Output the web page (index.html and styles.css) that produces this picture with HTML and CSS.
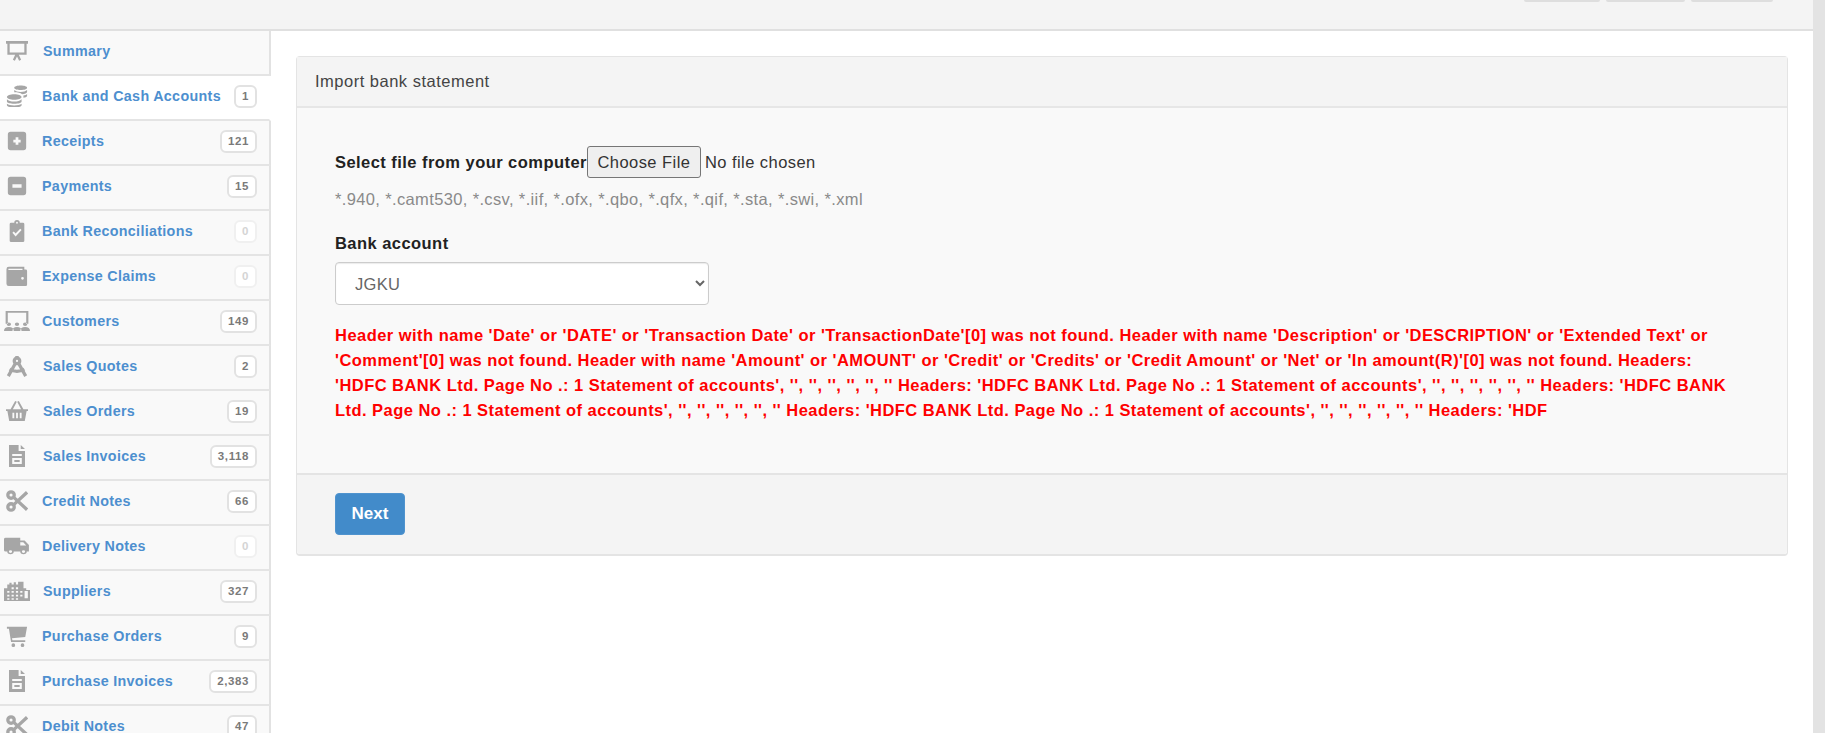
FILE: index.html
```html
<!DOCTYPE html>
<html lang="en">
<head>
<meta charset="utf-8">
<title>Import bank statement</title>
<link rel="stylesheet" href="styles.css">
</head>
<body>
<svg class="defs" width="0" height="0" aria-hidden="true">
  <symbol id="i-doc" viewBox="5 1 15 22" preserveAspectRatio="none"><path d="M5 1h9v6h6v16H5zM16 1l4 4h-4zM8 10v2h9v-2zM8 14v6h9v-6zm2 2h5v2h-5z" fill-rule="evenodd"/></symbol>
  <symbol id="i-scissors" viewBox="0 0 24 24"><g class="stroked heavy"><circle cx="5.500" cy="5.500" r="3.500"/><circle cx="5.500" cy="18.500" r="3.500"/><path d="M8.500 8 23 21.500M8.500 16 23 2.500"/></g></symbol>
</svg>
<div class="page">
  <div class="main">
    <header class="topbar">
      <span class="tab tab-a"></span><span class="tab tab-b"></span><span class="tab tab-c"></span>
    </header>
    <div class="layout">
      <nav class="sidebar">
        <a class="item shift"><svg class="icon" viewBox="0 0 24 24"><path fill-rule="evenodd" d="M0 1h24v3h-1.500v12H14l2.500 5.500-2.200 1L12 18l-2.300 4.500-2.200-1L10 16H1.500V4H0zm4 3v9.500h16V4z"/></svg><span class="label">Summary</span></a>
        <a class="item active"><svg class="icon" viewBox="0 0 24 24"><path d="M9 3c0-1.500 3-2.500 7-2.500s7 1 7 2.500-3 2.500-7 2.500-7-1-7-2.500zM9 5.500C10.500 7 13 7.500 16 7.500s5.500-.5 7-2v2c0 1.200-2.500 2.200-5.500 2.500-1.500-1.500-5-2-8.500-2zM19 11.500c2-.3 3.500-1 4-2v2.500c-.5 1-2 1.700-4 2zM1 13c0-1.500 3.500-3 8-3s8 1.500 8 3-3.500 3-8 3-8-1.500-8-3zM1 15.500c1.500 1.500 4.500 2.500 8 2.500s6.500-1 8-2.500V18c0 1.500-3.500 2.500-8 2.500S1 19.500 1 18zM1 20.500c1.500 1 4.500 1.800 8 1.800s6.500-.8 8-1.800V22c0 1.500-3.500 2.500-8 2.500S1 23.500 1 22z"/></svg><span class="label">Bank and Cash Accounts</span><span class="badge">1</span></a>
        <a class="item"><svg class="icon" viewBox="0 0 24 24"><path fill-rule="evenodd" d="M5 2h14a3 3 0 0 1 3 3v14a3 3 0 0 1-3 3H5a3 3 0 0 1-3-3V5a3 3 0 0 1 3-3zm5.500 6v2.500H8v3h2.500V16h3v-2.500H16v-3h-2.500V8z"/></svg><span class="label">Receipts</span><span class="badge">121</span></a>
        <a class="item"><svg class="icon" viewBox="0 0 24 24"><path fill-rule="evenodd" d="M5 2h14a3 3 0 0 1 3 3v14a3 3 0 0 1-3 3H5a3 3 0 0 1-3-3V5a3 3 0 0 1 3-3zm2 8v4h10v-4z"/></svg><span class="label">Payments</span><span class="badge">15</span></a>
        <a class="item"><svg class="icon" viewBox="0 0 24 24"><path fill-rule="evenodd" d="M9 3a3 3 0 0 1 6 0h3.500A1.500 1.500 0 0 1 20 4.500v18a1.500 1.500 0 0 1-1.500 1.500h-13A1.500 1.500 0 0 1 4 22.500v-18A1.500 1.500 0 0 1 5.500 3zM12 2a1 1 0 1 0 0 2 1 1 0 0 0 0-2zM7 14l3.500 4 6.500-7-1.500-1.500-5 5.300-2-2.300z"/></svg><span class="label">Bank Reconciliations</span><span class="badge muted">0</span></a>
        <a class="item"><svg class="icon" viewBox="0 0 24 24"><path fill-rule="evenodd" d="M3 2h17v3h1.500A1.500 1.500 0 0 1 23 6.500v15a1.500 1.500 0 0 1-1.500 1.500H3a2.500 2.500 0 0 1-2.500-2.500v-16A2.500 2.500 0 0 1 3 2zm0 2a.8.8 0 0 0 0 1.500h15V4zM18 13a1.500 1.500 0 1 0 0 3 1.500 1.500 0 0 0 0-3z"/></svg><span class="label">Expense Claims</span><span class="badge muted">0</span></a>
        <a class="item"><svg class="icon icon-wide" viewBox="0 0 24 24" preserveAspectRatio="none"><path fill-rule="evenodd" d="M1.500 1h21v14h-2V3h-17v12h-2zM4.500 13.500a2 2 0 1 1 0 4 2 2 0 0 1 0-4zM12 13.500a2 2 0 1 1 0 4 2 2 0 0 1 0-4zM19.500 13.500a2 2 0 1 1 0 4 2 2 0 0 1 0-4zM0 23c0-3 1.500-4.500 4.500-4.500S9 20 9 23zM7.800 23c.2-3 1.200-4.500 4.200-4.500s4 1.500 4.200 4.500zM15 23c0-3 1.500-4.500 4.500-4.500S24 20 24 23z"/></svg><span class="label">Customers</span><span class="badge">149</span></a>
        <a class="item shift"><svg class="icon" viewBox="0 0 24 24"><g class="stroked heavy"><circle cx="12" cy="6.500" r="3"/><path d="M12 1v2M10 9.500 2.500 23M14 9.500 21.500 23M4 15.500c5 3 11 3 16 0"/></g></svg><span class="label">Sales Quotes</span><span class="badge">2</span></a>
        <a class="item shift"><svg class="icon" viewBox="0 0 24 24"><path fill-rule="evenodd" d="M0 10h5L10 1l1.800 1L7.500 10h9L12.200 2 14 1l5 9h5v2h-1.500L20.500 23h-17L1.500 12H0zm7 4v6h2v-6zm4 0v6h2v-6zm4 0v6h2v-6z"/></svg><span class="label">Sales Orders</span><span class="badge">19</span></a>
        <a class="item shift"><svg class="icon doc-icon"><use href="#i-doc"/></svg><span class="label">Sales Invoices</span><span class="badge">3,118</span></a>
        <a class="item"><svg class="icon"><use href="#i-scissors"/></svg><span class="label">Credit Notes</span><span class="badge">66</span></a>
        <a class="item"><svg class="icon icon-wide" viewBox="0 0 24 24" preserveAspectRatio="none"><path fill-rule="evenodd" d="M1.500 3H15v3h4l4 5v7h-2a3 3 0 0 1-6 0H9a3 3 0 0 1-6 0H1.500A1.500 1.500 0 0 1 0 16.500v-12A1.500 1.500 0 0 1 1.500 3zM15 8v3.500h5.500L17.800 8zM6 16.500a1.500 1.500 0 1 0 0 3 1.500 1.500 0 0 0 0-3zm12 0a1.500 1.500 0 1 0 0 3 1.500 1.500 0 0 0 0-3z"/></svg><span class="label">Delivery Notes</span><span class="badge muted">0</span></a>
        <a class="item shift"><svg class="icon icon-wide" viewBox="0 0 24 24" preserveAspectRatio="none"><path fill-rule="evenodd" d="M0 9h3V5h2V3h2v2h2V2.500h2V5h2V2h5v7h2.500v2H24v12H0zM3 12v2h2v-2zm4 0v2h2v-2zm4 0v2h2v-2zm4 0v2h2v-2zM3 16v2h2v-2zm4 0v2h2v-2zm4 0v2h2v-2zm4 0v2h2v-2zM3 20v1.500h2V20zm4 0v1.500h2V20zm4 0v1.500h2V20zM7 8v2h2V8zm4 0v2h2V8zm8 4v8h3v-8z"/></svg><span class="label">Suppliers</span><span class="badge">327</span></a>
        <a class="item"><svg class="icon" viewBox="0 0 24 24"><path fill-rule="evenodd" d="M1 2h22l-2 11-14.500 1.500.5 2H21v2H5.500L3.200 4H1zM8 20a2 2 0 1 1 0 4 2 2 0 0 1 0-4zM18 20a2 2 0 1 1 0 4 2 2 0 0 1 0-4z"/></svg><span class="label">Purchase Orders</span><span class="badge">9</span></a>
        <a class="item"><svg class="icon doc-icon"><use href="#i-doc"/></svg><span class="label">Purchase Invoices</span><span class="badge">2,383</span></a>
        <a class="item"><svg class="icon"><use href="#i-scissors"/></svg><span class="label">Debit Notes</span><span class="badge">47</span></a>
      </nav>
      <main class="content">
        <section class="card">
          <div class="card-head">Import bank statement</div>
          <form class="card-body">
            <div class="file-row">
              <label class="file-label" for="stmt">Select file from your computer</label><input id="stmt" class="file-input" type="file">
            </div>
            <p class="hint">*.940, *.camt530, *.csv, *.iif, *.ofx, *.qbo, *.qfx, *.qif, *.sta, *.swi, *.xml</p>
            <label class="field-label" for="acct">Bank account</label>
            <select id="acct" class="select"><option>JGKU</option></select>
            <p class="error">Header with name 'Date' or 'DATE' or 'Transaction Date' or 'TransactionDate'[0] was not found. Header with name 'Description' or 'DESCRIPTION' or 'Extended Text' or 'Comment'[0] was not found. Header with name 'Amount' or 'AMOUNT' or 'Credit' or 'Credits' or 'Credit Amount' or 'Net' or 'In amount(R)'[0] was not found. Headers: 'HDFC BANK Ltd. Page No .: 1 Statement of accounts', '', '', '', '', '', '' Headers: 'HDFC BANK Ltd. Page No .: 1 Statement of accounts', '', '', '', '', '', '' Headers: 'HDFC BANK Ltd. Page No .: 1 Statement of accounts', '', '', '', '', '', '' Headers: 'HDFC BANK Ltd. Page No .: 1 Statement of accounts', '', '', '', '', '', '' Headers: 'HDF</p>
          </form>
          <div class="card-foot"><button class="next" type="button">Next</button></div>
        </section>
      </main>
    </div>
  </div>
  <div class="scrollbar"></div>
</div>
</body>
</html>
```
FILE: styles.css
```css
* { box-sizing: border-box; }
html, body { margin: 0; height: 100%; overflow: hidden; background: #fff; }
body { font-family: "Liberation Sans", Arial, sans-serif; font-size: 14px; color: #333; }
.defs { position: absolute; }
.page { display: flex; height: 733px; }
.main { flex: 1; min-width: 0; display: flex; flex-direction: column; }
.scrollbar { width: 12px; background: #e3e3e3; }

.topbar { height: 31px; flex: none; background: #f4f4f4; border-bottom: 2px solid #e0e0e0; display: flex; justify-content: flex-end; align-items: flex-start; gap: 6px; padding-right: 40px; }
.tab { height: 2px; background: #dedede; border-radius: 0 0 3px 3px; }
.tab-a { width: 76px; }
.tab-b { width: 79px; }
.tab-c { width: 82px; }

.layout { flex: 1; min-height: 0; display: flex; }
.sidebar { width: 271px; flex: none; }
.item { height: 45px; display: flex; align-items: center; padding: 0 12px 3px 6px; background: #f9f9f9; border-right: 2px solid #e2e2e2; border-bottom: 2px solid #e4e4e4; color: #4d8fcf; font-weight: 700; font-size: 14.300px; letter-spacing: .32px; }
.item.active { background: #fff; border-right-color: #fff; }
.icon { width: 22px; height: 22px; flex: none; fill: #a6a6a6; margin-right: 14px; }
.icon-wide { width: 26px; margin-left: -2px; margin-right: 12px; }
.stroked { fill: none; stroke: #a6a6a6; stroke-width: 3; }
.heavy { stroke-width: 3.600; }
.shift .label { margin-left: 1px; }
.doc-icon { width: 16px; margin-left: 3px; margin-right: 17px; }
.label { flex: 1; white-space: nowrap; }
.badge { height: 23px; min-width: 23px; padding: 0 6px; display: flex; align-items: center; justify-content: center; background: #fff; border: 2px solid #e2e2e2; border-radius: 6px; color: #7a7a7a; font-size: 11.500px; font-weight: 700; letter-spacing: .6px; }
.badge.muted { color: #d4d4d4; border-color: #f0f0f0; }

.content { flex: 1; min-width: 0; padding: 25px 25px 0 25px; }
.card { border: 1px solid #e4e4e4; border-bottom-width: 2px; border-radius: 4px; background: #f9f9f9; }
.card-head { height: 51px; display: flex; align-items: center; padding: 0 18px; background: #f4f4f4; border-bottom: 2px solid #e6e6e6; font-size: 16.500px; letter-spacing: .5px; color: #444; }
.card-body { height: 365px; padding: 38px 38px 0; display: flex; flex-direction: column; align-items: flex-start; }
.file-row { display: flex; align-items: center; height: 32px; }
.file-label { font-weight: 700; font-size: 16.500px; letter-spacing: .45px; color: #222; }
.file-input { font-family: "Liberation Sans", Arial, sans-serif; font-size: 16.500px; letter-spacing: .45px; color: #333; width: 300px; }
.file-input::file-selector-button { font: inherit; letter-spacing: .45px; height: 32px; width: 114px; padding: 0; margin-right: 4px; background: #efefef; border: 1px solid #767676; border-radius: 3px; color: #333; }
.hint { margin: 10px 0 0; font-size: 16.500px; letter-spacing: .36px; line-height: 22px; color: #8a8a8a; }
.field-label { margin-top: 23px; font-weight: 700; font-size: 16.500px; letter-spacing: .45px; line-height: 20px; color: #222; }
.select { margin-top: 9px; width: 374px; height: 43px; padding: 0 15px; background: #fff; border: 1px solid #ccc; border-radius: 4px; box-shadow: inset 0 1px 1px rgba(0,0,0,.08); font-family: "Liberation Sans", Arial, sans-serif; font-size: 16.500px; letter-spacing: .3px; color: #666; }
.error { margin: 18px 0 0; width: 1403px; font-weight: 700; font-size: 16.500px; letter-spacing: .46px; line-height: 25px; color: #f00; }
.card-foot { height: 81px; padding-top: 18px; padding-left: 38px; background: #f4f4f4; border-top: 2px solid #e4e4e4; border-radius: 0 0 4px 4px; }
.next { width: 70px; height: 42px; padding: 0; background: #428bca; border: 1px solid #4f93ce; border-radius: 4px; color: #fff; font-family: "Liberation Sans", Arial, sans-serif; font-size: 17px; font-weight: 700; }
```
